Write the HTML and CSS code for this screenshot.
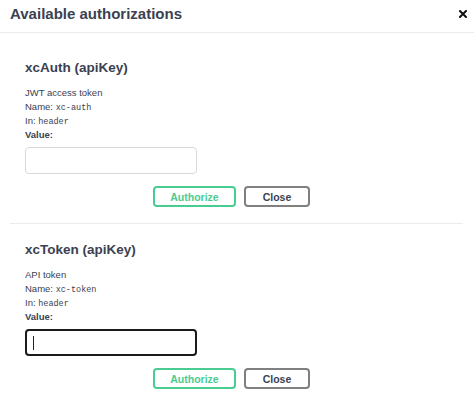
FILE: index.html
```html
<!DOCTYPE html>
<html lang="en">
<head>
<meta charset="utf-8">
<title>Available authorizations</title>
<link rel="stylesheet" href="styles.css">
</head>
<body>
<div class="modal">
  <div class="modal-header">
    <h3 class="modal-title">Available authorizations</h3>
    <button class="close-modal" aria-label="Close">
      <svg width="8" height="8" viewBox="0 0 8 8"><path d="M1 1L7 7M7 1L1 7" stroke="#111" stroke-width="2" stroke-linecap="square"/></svg>
    </button>
  </div>
  <div class="modal-content">
    <div class="auth-container">
      <h4 class="auth-title">xcAuth (apiKey)</h4>
      <p class="line">JWT access token</p>
      <p class="line">Name: <code>xc-auth</code></p>
      <p class="line">In: <code>header</code></p>
      <label class="value-label">Value:</label>
      <div class="field"><input class="text-input" type="text"></div>
      <div class="btn-wrapper">
        <button class="btn authorize">Authorize</button>
        <button class="btn close">Close</button>
      </div>
    </div>
    <div class="auth-container last">
      <h4 class="auth-title">xcToken (apiKey)</h4>
      <p class="line">API token</p>
      <p class="line">Name: <code>xc-token</code></p>
      <p class="line">In: <code>header</code></p>
      <label class="value-label">Value:</label>
      <div class="field"><div class="text-input focused"><span class="caret"></span></div></div>
      <div class="btn-wrapper">
        <button class="btn authorize">Authorize</button>
        <button class="btn close">Close</button>
      </div>
    </div>
  </div>
</div>
</body>
</html>
```
FILE: styles.css
```css
* { box-sizing: border-box; }
html, body { margin: 0; padding: 0; background: #fff; }
body { font-family: "Liberation Sans", Arial, sans-serif; color: #3b4151; }

.modal-header {
  display: flex;
  align-items: flex-start;
  height: 33px;
  padding: 5px 7px 0 10px;
  border-bottom: 1px solid #ebebeb;
}
.modal-title {
  margin: 0;
  font-size: 15px;
  line-height: 18px;
  font-weight: bold;
  color: #3b4151;
}
.close-modal {
  margin-left: auto;
  margin-top: 5px;
  padding: 0;
  border: 0;
  background: none;
  width: 8px;
  height: 8px;
  display: flex;
}

.modal-content { padding-top: 9px; }

.auth-container {
  margin: 0 11px 0 10px;
  padding: 17px 25px 16px 15px;
  border-bottom: 1px solid #ebebeb;
}
.auth-container.last { border-bottom: 0; }

.auth-title {
  margin: 0 0 9px;
  font-size: 13.5px;
  line-height: 18px;
  font-weight: bold;
}
.line {
  margin: 0;
  height: 14px;
  font-size: 9.5px;
  line-height: 14px;
}
.line code {
  font-family: "Liberation Mono", "DejaVu Sans Mono", monospace;
  font-size: 8.5px;
  line-height: 1;
}
.value-label {
  display: block;
  height: 14px;
  font-size: 9.5px;
  line-height: 14px;
  font-weight: bold;
}
.field { margin-top: 5px; height: 27px; }
.text-input {
  display: block;
  width: 172px;
  height: 27px;
  margin: 0;
  border: 1px solid #d9d9d9;
  border-radius: 4px;
  background: #fff;
  outline: none;
  font: 10px "Liberation Sans", Arial, sans-serif;
}
.text-input.focused {
  border: 2px solid #1b1b1b;
  display: flex;
  align-items: center;
  padding-left: 6px;
}
.caret {
  display: block;
  width: 1px;
  height: 14px;
  background: #222;
}

.btn-wrapper {
  display: flex;
  justify-content: center;
  gap: 8px;
  margin-top: 12px;
  height: 21px;
}
.btn {
  height: 21px;
  padding: 0;
  border: 2px solid #808080;
  border-radius: 4px;
  background: transparent;
  font-family: "Liberation Sans", Arial, sans-serif;
  font-size: 10.5px;
  font-weight: bold;
  color: #3b4151;
  text-align: center;
}
.btn.authorize {
  width: 83px;
  border-color: #49cc90;
  color: #49cc90;
}
.btn.close { width: 66px; }
```
